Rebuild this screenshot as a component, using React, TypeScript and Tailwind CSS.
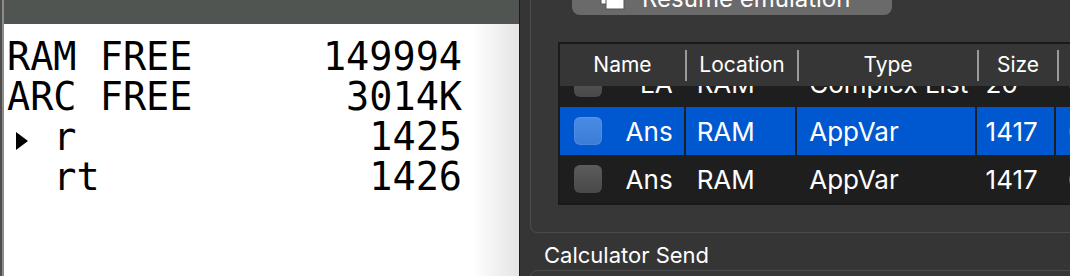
import React from 'react'

const lcdRows = [
  { label: 'RAM FREE', value: '149994', arrow: false },
  { label: 'ARC FREE', value: '3014K', arrow: false },
  { label: 'r', value: '1425', arrow: true, indent: true },
  { label: 'rt', value: '1426', arrow: false, indent: true },
]

type Row = { name: string; loc: string; type: string; size: string; selected?: boolean }

const rows: Row[] = [
  { name: 'LA', loc: 'RAM', type: 'Complex List', size: '20' },
  { name: 'Ans', loc: 'RAM', type: 'AppVar', size: '1417', selected: true },
  { name: 'Ans', loc: 'RAM', type: 'AppVar', size: '1417' },
]

const Arrow = () => (
  <svg width="12" height="18" viewBox="0 0 12 18" className="absolute left-[9px] top-[15px]">
    <polygon points="0,0 12,9 0,18" fill="#000" />
  </svg>
)

const CalcScreen = () => {
  return (
    <div className="flex h-full w-[519px] shrink-0">
      <div className="w-[2px] bg-[#4f4f4f]" />
      <div className="w-[2px] bg-[#8c8c8c]" />
      <div className="flex flex-1 flex-col">
        <div className="h-[24px] bg-[#515551]" />
        <div className="flex-1 bg-[linear-gradient(to_right,#ffffff_0%,#ffffff_91%,#e4e4e4_100%)] pt-[13px] pl-[3px] font-['DejaVu_Sans_Mono',monospace] text-[38.5px] leading-[40px] text-black">
          {lcdRows.map((r, i) => (
            <div key={i} className="relative flex w-[455px] justify-between whitespace-pre">
              {r.arrow && <Arrow />}
              <span>{r.indent ? '  ' + r.label : r.label}</span>
              <span>{r.value}</span>
            </div>
          ))}
        </div>
      </div>
    </div>
  )
}

const Checkbox = ({ on }: { on?: boolean }) => (
  <div
    className={
      on
        ? 'h-[28px] w-[28px] shrink-0 rounded-[6px] bg-[linear-gradient(#4a8ce4,#3a7cd8)] shadow-[inset_0_0_0_1px_rgba(255,255,255,0.08)]'
        : 'h-[28px] w-[28px] shrink-0 rounded-[6px] bg-[linear-gradient(#5c5c5c,#484848)]'
    }
  />
)

const VarTable = () => {
  return (
    <div className="ml-[27px] mt-[27px] w-[600px] border-2 border-[#1a1a1a] bg-[#1e1e1e] font-['Inter',sans-serif] text-white">
      <div className="relative z-10 flex h-[42px] items-center bg-[#363636] text-[21px]">
        <div className="flex h-full w-[125px] items-center justify-center">Name</div>
        <div className="h-[31px] w-[2px] bg-[#9a9a9a]" />
        <div className="flex h-full w-[110px] items-center justify-center">Location</div>
        <div className="h-[31px] w-[2px] bg-[#9a9a9a]" />
        <div className="flex h-full w-[178px] items-center justify-center">Type</div>
        <div className="h-[31px] w-[2px] bg-[#9a9a9a]" />
        <div className="flex h-full w-[78px] items-center justify-center">Size</div>
        <div className="h-[31px] w-[2px] bg-[#9a9a9a]" />
      </div>
      <div className="h-[117px] overflow-hidden">
        <div className="-mt-[27px]">
          {rows.map((r, i) => (
            <div key={i} className="flex h-[48px] gap-[2px] text-[26px]">
              <div className={`flex w-[124px] items-center pl-[14px] pr-[11px] ${r.selected ? 'bg-[#0058d0]' : ''}`}>
                <Checkbox on={r.selected} />
                <span className="ml-auto">{r.name}</span>
              </div>
              <div className={`flex w-[110px] items-center pl-[11px] ${r.selected ? 'bg-[#0058d0]' : ''}`}>{r.loc}</div>
              <div className={`flex w-[178px] items-center pl-[12px] ${r.selected ? 'bg-[#0058d0]' : ''}`}>{r.type}</div>
              <div className={`flex w-[78px] items-center pl-[9px] ${r.selected ? 'bg-[#0058d0]' : ''}`}>{r.size}</div>
              <div className={`flex w-[100px] items-center pl-[12px] ${r.selected ? 'bg-[#0058d0]' : ''}`}>0</div>
            </div>
          ))}
        </div>
      </div>
    </div>
  )
}

const SidePanel = () => {
  return (
    <div className="flex h-full flex-1 flex-col overflow-hidden border-l border-[#1b1b1b] bg-[#353535] pl-[10px]">
      <div className="h-[233px] w-[600px] shrink-0 rounded-b-[7px] border border-t-0 border-[#4a4a4a] bg-[#373737]">
        <div className="-mt-[25px] ml-[41px] flex h-[40px] w-[320px] items-center gap-[16px] rounded-[8px] bg-[#6a6a6a] pl-[28px] pt-[8px] font-['Inter',sans-serif] text-[24px] text-white">
          <svg width="26" height="24" viewBox="0 0 26 24">
            <rect x="1" y="1" width="18" height="16" fill="#fff" stroke="#555" strokeWidth="1" />
            <rect x="6" y="6" width="18" height="16" fill="#fff" stroke="#555" strokeWidth="1" />
          </svg>
          <span>Resume emulation</span>
        </div>
        <VarTable />
      </div>
      <div className="ml-[14px] mt-[9px] font-['Inter',sans-serif] text-[22px] leading-[26px] text-white">Calculator Send</div>
      <div className="mt-[2px] h-[20px] w-[600px] shrink-0 rounded-t-[7px] border border-b-0 border-[#4a4a4a] bg-[#373737]" />
    </div>
  )
}

export default function App() {
  return (
    <div className="flex h-[276px] w-[1070px] overflow-hidden bg-[#353535]">
      <CalcScreen />
      <SidePanel />
    </div>
  )
}
